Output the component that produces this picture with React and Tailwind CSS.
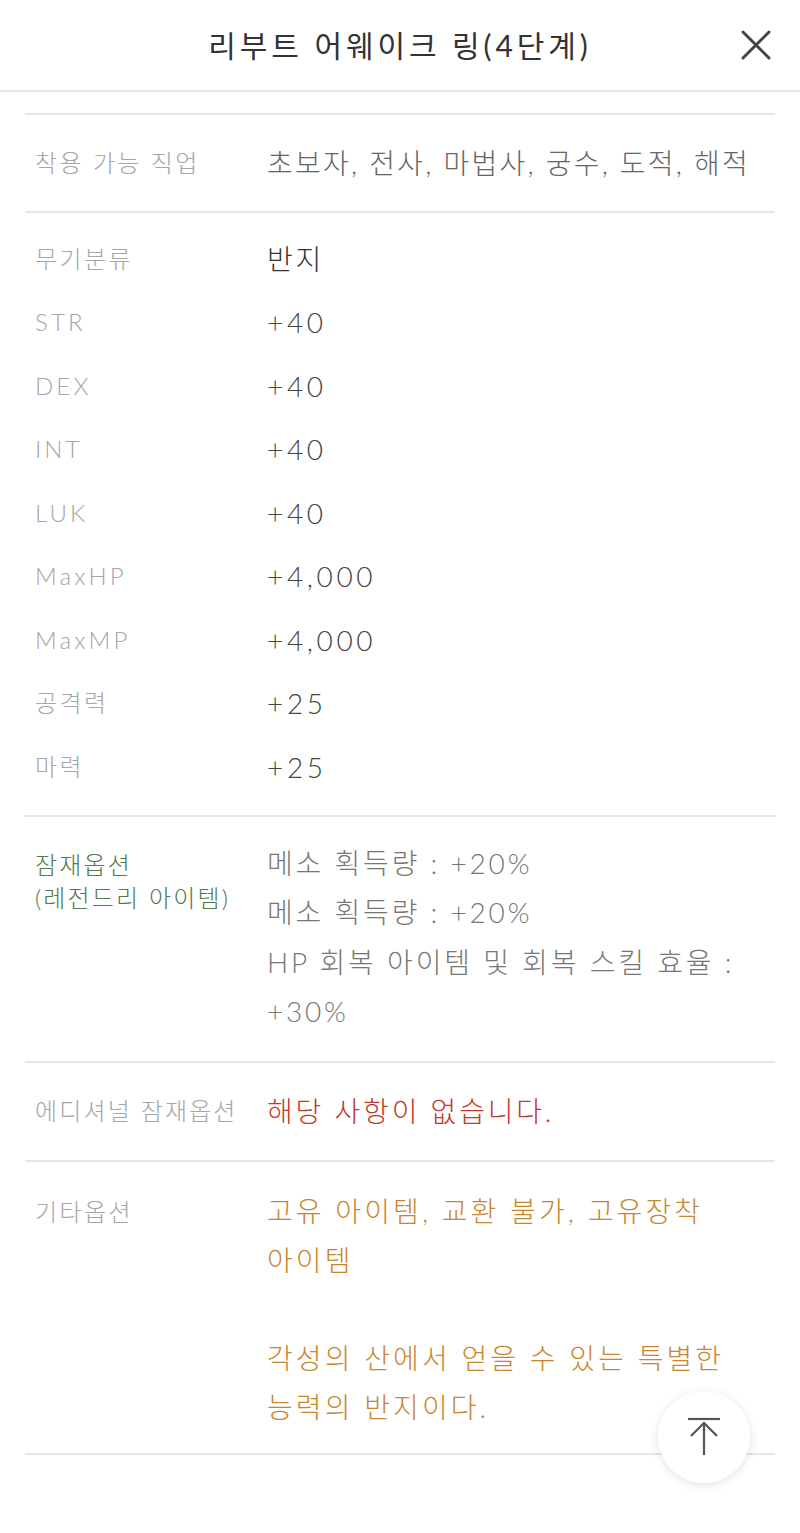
import React from "react";

const stats = [
  ["무기분류", "반지", true],
  ["STR", "+40"],
  ["DEX", "+40"],
  ["INT", "+40"],
  ["LUK", "+40"],
  ["MaxHP", "+4,000"],
  ["MaxMP", "+4,000"],
  ["공격력", "+25"],
  ["마력", "+25"],
];

const isLatin = (s) => /^[A-Za-z0-9+,]+$/.test(s);

const App = () => {
  return (
    <div className="relative w-full min-h-[1533px] bg-white font-['Lato','Noto_Sans_CJK_KR',sans-serif] break-keep">
      <header className="h-[92px] flex items-center justify-center border-b-2 border-[#e8e8e8] relative">
        <h1 className="text-[30px] text-[#333] tracking-[0.13em]">리부트 어웨이크 링(4단계)</h1>
        <button className="absolute right-[28px] top-[29px] w-[32px] h-[32px] flex items-center justify-center">
          <svg width="32" height="32" viewBox="0 0 32 32" fill="none" stroke="#444" strokeWidth="3" strokeLinecap="round">
            <path d="M3 3 L29 29 M29 3 L3 29" />
          </svg>
        </button>
      </header>

      <div className="px-[25px] pt-[21px]">
        <section className="border-t-2 border-[#e6e6e6] py-[26px] flex items-center">
          <div className="w-[242px] pl-[10px] text-[24px] text-[#a3a6aa] font-light tracking-[0.1em]">착용 가능 직업</div>
          <div className="text-[28px] text-[#666] leading-[44px] font-light tracking-[0.08em]">초보자, 전사, 마법사, 궁수, 도적, 해적</div>
        </section>

        <section className="border-t-2 border-[#e6e6e6] pt-[14px] pb-[16px]">
          {stats.map(([k, v, dark]) => (
            <div key={k} className="flex items-center h-[63.5px]">
              <div className={`w-[242px] pl-[10px] text-[24px] text-[#a3a6aa] font-light ${isLatin(k) ? "tracking-[0.13em]" : "tracking-[0.1em]"}`}>{k}</div>
              <div className={`text-[28px] font-light ${dark ? "text-[#333] tracking-[0.1em]" : "text-[#444] tracking-[0.13em]"}`}>{v}</div>
            </div>
          ))}
        </section>

        <section className="border-t-2 border-[#e6e6e6] pt-[22px] pb-[24px] flex">
          <div className="w-[242px] shrink-0 pl-[10px] text-[24px] leading-[33px] text-[#4e7a4e] pt-[9px] font-light tracking-[0.09em]">
            잠재옵션
            <br />
            (레전드리 아이템)
          </div>
          <div className="flex-1 pr-[10px] text-[28px] leading-[49.5px] text-[#777] font-light tracking-[0.1em]">
            <div>메소 획득량 : +20%</div>
            <div>메소 획득량 : +20%</div>
            <div>HP 회복 아이템 및 회복 스킬 효율 : +30%</div>
          </div>
        </section>

        <section className="border-t-2 border-[#e6e6e6] py-[24px] flex items-center">
          <div className="w-[242px] pl-[10px] text-[24px] text-[#a3a6aa] font-light tracking-[0.09em]">에디셔널 잠재옵션</div>
          <div className="text-[28px] leading-[49px] text-[#c0392b] font-light tracking-[0.1em]">해당 사항이 없습니다.</div>
        </section>

        <section className="border-y-2 border-[#e6e6e6] pt-[25px] pb-[21px] flex">
          <div className="w-[242px] shrink-0 pl-[10px] text-[24px] leading-[49px] text-[#a3a6aa] font-light tracking-[0.1em]">기타옵션</div>
          <div className="flex-1 pr-[30px] text-[28px] leading-[49px] text-[#c98631] font-light tracking-[0.11em]">
            <div>고유 아이템, 교환 불가, 고유장착 아이템</div>
            <div className="h-[49px]" />
            <div>각성의 산에서 얻을 수 있는 특별한 능력의 반지이다.</div>
          </div>
        </section>
      </div>

      <button className="absolute left-[658px] top-[1391px] w-[92px] h-[92px] rounded-full bg-white shadow-[0_2px_10px_rgba(0,0,0,0.12)] flex items-center justify-center">
        <svg width="36" height="40" viewBox="0 0 36 40" fill="none" stroke="#555" strokeWidth="2.2">
          <path d="M2 2 H34" />
          <path d="M18 6 V38" />
          <path d="M5 19 L18 6 L31 19" />
        </svg>
      </button>
    </div>
  );
};

export default App;
